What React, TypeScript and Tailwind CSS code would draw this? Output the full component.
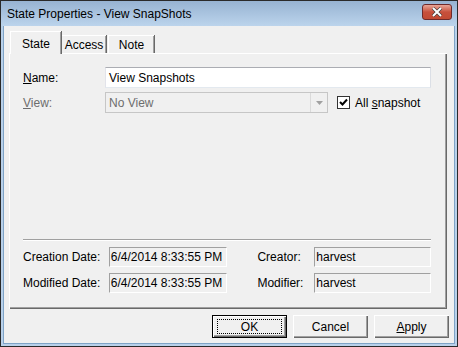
import React from 'react';

const raised =
  'shadow-[inset_1px_1px_0_#ffffff,inset_-1px_-1px_0_#696969,inset_-2px_-2px_0_#a0a0a0]';
const sunken = 'border border-t-[#a0a0a0] border-l-[#a0a0a0] border-r-[#ffffff] border-b-[#ffffff]';

function Tab({ label, active }: { label: string; active?: boolean }) {
  return (
    <div
      className={
        'flex items-center justify-center bg-[#f0f0f0] border-l border-t border-white ' +
        (active
          ? 'h-[23px] w-[51px] shadow-[inset_-1px_0_0_#a0a0a0,1px_0_0_#696969] z-10 -mb-[1px] relative'
          : 'h-[18px] shadow-[inset_-1px_0_0_#a0a0a0,1px_0_0_#696969]')
      }
      style={active ? undefined : { width: label === 'Access' ? 45 : 46 }}
    >
      <span className="pt-[1px]">{label}</span>
    </div>
  );
}

function ReadBox({ value, width }: { value: string; width: string }) {
  return (
    <div className={`h-[20px] ${width} ${sunken} bg-[#f0f0f0] flex items-center pl-[1px] leading-none`}>
      {value}
    </div>
  );
}

function Button({ label, def, mn }: { label: string; def?: boolean; mn?: boolean }) {
  return (
    <div
      className={
        'w-[75px] h-[23px] bg-[#f0f0f0] flex items-center justify-center ' +
        (def ? 'border border-[#000] ' : '') +
        raised
      }
    >
      {def ? (
        <div className="w-[65px] h-[15px] border border-dotted border-black flex items-center justify-center">
          {label}
        </div>
      ) : mn ? (
        <span>
          <span className="underline">A</span>pply
        </span>
      ) : (
        label
      )}
    </div>
  );
}

export default function App() {
  return (
    <div
      className="w-[458px] h-[347px] bg-[#b9d1ea] border border-[#2a2a2a] flex flex-col text-[12px] text-black"
      style={{ fontFamily: '"Liberation Sans", Arial, sans-serif' }}
    >
      <div className="h-[25px] shrink-0 bg-gradient-to-b from-[#97b3d2] to-[#bcd4ec] flex items-center pl-[6px] pr-[5px]">
        <span className="text-[12px] text-black flex-1 pt-[1px]">State Properties - View SnapShots</span>
        <div className="w-[30px] h-[16px] rounded-[3px] border border-[#6e2a2a] bg-gradient-to-b from-[#e8a597] via-[#c7503c] to-[#c24a33] flex items-center justify-center -mt-[4px]">
          <svg width="12" height="10" viewBox="0 0 12 10">
            <path d="M2 1 L10 9 M10 1 L2 9" stroke="#3a3a3a" strokeWidth="3.2" />
            <path d="M2 1 L10 9 M10 1 L2 9" stroke="#ffffff" strokeWidth="2" />
          </svg>
        </div>
      </div>

      <div className="flex-1 mx-[2px] mb-[2px] bg-[#f0f0f0] border-l border-r border-b border-[#7fa3c6] flex flex-col px-[5px] pt-[4px]">
        <div className="flex items-end h-[23px] pl-[1px]">
          <Tab label="State" active />
          <Tab label="Access" />
          <div className="w-[2px]" />
          <Tab label="Note" />
        </div>

        <div className={`h-[256px] w-[438px] bg-[#f0f0f0] ${raised} flex flex-col pt-[14px] pl-[14px] pr-[16px] pb-[16px]`}>
          <div className="flex items-center h-[21px]">
            <span className="w-[82px]">
              <span className="underline">N</span>ame:
            </span>
            <div className="flex-1 h-[21px] bg-white border border-[#abadb3] border-l-[#e2e3ea] border-r-[#dbdfe6] border-b-[#e3e9ef] flex items-center pl-[3px]">
              View Snapshots
            </div>
          </div>

          <div className="flex items-center h-[21px] mt-[4px]">
            <span className="w-[82px] text-[#6d6d6d]">
              <span className="underline">V</span>iew:
            </span>
            <div className="w-[223px] h-[21px] border border-[#c6c6c6] bg-[#f0f0f0] flex items-center pl-[3px] text-[#6d6d6d]">
              <span className="flex-1">No View</span>
              <div className="w-[17px] h-[19px] border-l border-[#dadada] flex items-center justify-center">
                <svg width="7" height="4" viewBox="0 0 7 4">
                  <path d="M0 0 H7 L3.5 4 Z" fill="#a0a0a0" />
                </svg>
              </div>
            </div>
            <div className="ml-[9px] w-[13px] h-[13px] border border-[#333] bg-white flex items-center justify-center">
              <svg width="9" height="9" viewBox="0 0 9 9">
                <path d="M1 4 L3.5 6.5 L8 1.5" stroke="#000" strokeWidth="2" fill="none" />
              </svg>
            </div>
            <span className="ml-[5px]">
              All <span className="underline">s</span>napshot
            </span>
          </div>

          <div className="flex-1" />

          <div className="h-[2px] border-t border-[#a0a0a0] border-b border-b-white" />

          <div className="flex items-center mt-[6px]">
            <span className="w-[86px]">Creation Date:</span>
            <ReadBox value="6/4/2014 8:33:55 PM" width="w-[118px]" />
            <span className="w-[31px]" />
            <span className="w-[57px]">Creator:</span>
            <ReadBox value="harvest" width="w-[117px]" />
          </div>
          <div className="flex items-center mt-[6px]">
            <span className="w-[86px]">Modified Date:</span>
            <ReadBox value="6/4/2014 8:33:55 PM" width="w-[118px]" />
            <span className="w-[31px]" />
            <span className="w-[57px]">Modifier:</span>
            <ReadBox value="harvest" width="w-[117px]" />
          </div>
        </div>

        <div className="flex justify-end gap-[6px] mt-[6px]">
          <Button label="OK" def />
          <Button label="Cancel" />
          <Button label="Apply" mn />
        </div>
      </div>
    </div>
  );
}
